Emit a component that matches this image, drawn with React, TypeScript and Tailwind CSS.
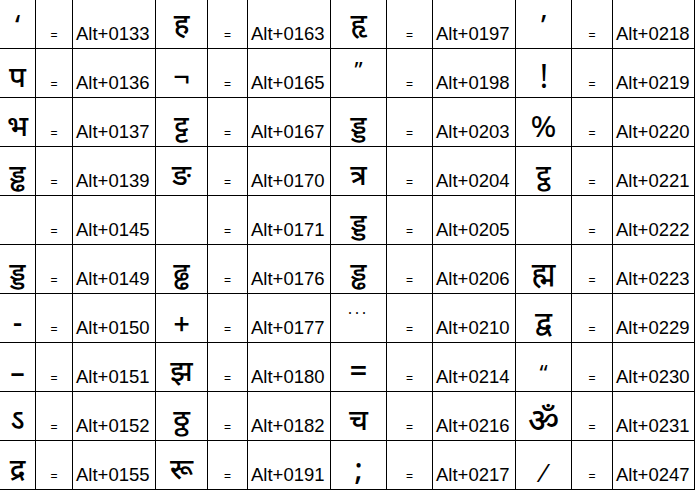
import React from "react";

const rows: [string, string, string, string, string, string, string, string][] = [
  ["‘", "0133", "ह", "0163", "हृ", "0197", "’", "0218"],
  ["प", "0136", "¬", "0165", "”", "0198", "!", "0219"],
  ["भ", "0137", "ट्ट", "0167", "ड्ड", "0203", "%", "0220"],
  ["ड्ढ", "0139", "ङ", "0170", "त्र", "0204", "ट्ठ", "0221"],
  ["", "0145", "", "0171", "ड्ड", "0205", "", "0222"],
  ["ड्ड", "0149", "ढ्ढ", "0176", "ड्ढ", "0206", "ह्म", "0223"],
  ["-", "0150", "+", "0177", "...", "0210", "द्व", "0229"],
  ["–", "0151", "झ", "0180", "=", "0214", "“", "0230"],
  ["ऽ", "0152", "ठ्ठ", "0182", "च", "0216", "ॐ", "0231"],
  ["द्र", "0155", "रू", "0191", ";", "0217", "⁄", "0247"],
];

const font = {
  fontFamily:
    '"Noto Sans Devanagari", "Lohit Devanagari", "Noto Sans", "Liberation Sans", sans-serif',
};

const special: Record<string, string> = {
  "ह": "items-end pb-[6px] text-[29px] font-medium",
  "हृ": "items-end pb-[6px] text-[29px] font-medium",
  "...": "items-start pt-[9px] text-[15px] tracking-[3px] font-normal",
  "ॐ": "items-end pb-[0px] text-[33px] font-medium",
  "%": "items-end pb-[1px] text-[32px] font-normal",
  "!": "items-end pb-[1px] text-[32px] font-normal",
  "+": "items-end pb-[0px] text-[30px] font-medium",
  "=": "items-end pb-[2px] text-[32px] font-medium",
  "-": "items-end pb-[1px] text-[29px] font-medium",
  "–": "items-end pb-[0px] text-[29px] font-medium",
  "⁄": "items-end pb-[0px] text-[26px] font-normal",
  "“": "items-start pt-[22px] text-[22px] font-normal",
  "”": "items-start pt-[13px] text-[22px] font-normal",
  "‘": "items-end pb-[4px] text-[29px] font-normal",
  "’": "items-end pb-[4px] text-[29px] font-normal",
  ";": "items-end pb-[1px] text-[30px] font-medium",
};

function Glyph({ g }: { g: string }) {
  const cls = special[g] ?? "items-end pb-[2px] text-[29px] font-medium";
  return (
    <div
      className={`h-[49px] border-r border-b border-black flex justify-center leading-none text-black ${cls}`}
      style={font}
    >
      {g}
    </div>
  );
}

function Eq() {
  return (
    <div className="h-[49px] border-r border-b border-black flex items-end justify-center pb-[7px] text-[12px] leading-none text-black font-['Liberation_Sans',sans-serif]">
      =
    </div>
  );
}

function Code({ c }: { c: string }) {
  return (
    <div className="h-[49px] border-r border-b border-black flex items-end pl-[3px] pb-[5px] text-[18.5px] leading-none text-black font-['Liberation_Sans',sans-serif] whitespace-nowrap">
      Alt+{c}
    </div>
  );
}

export default function App() {
  return (
    <div className="w-[700px] h-[495px] bg-white overflow-hidden">
      <div className="grid grid-cols-[36px_37px_83px_52px_40px_83px_56px_46px_83px_56px_41px_82px] w-[695px]">
        {rows.map((r, i) => (
          <React.Fragment key={i}>
            <Glyph g={r[0]} />
            <Eq />
            <Code c={r[1]} />
            <Glyph g={r[2]} />
            <Eq />
            <Code c={r[3]} />
            <Glyph g={r[4]} />
            <Eq />
            <Code c={r[5]} />
            <Glyph g={r[6]} />
            <Eq />
            <Code c={r[7]} />
          </React.Fragment>
        ))}
      </div>
    </div>
  );
}
